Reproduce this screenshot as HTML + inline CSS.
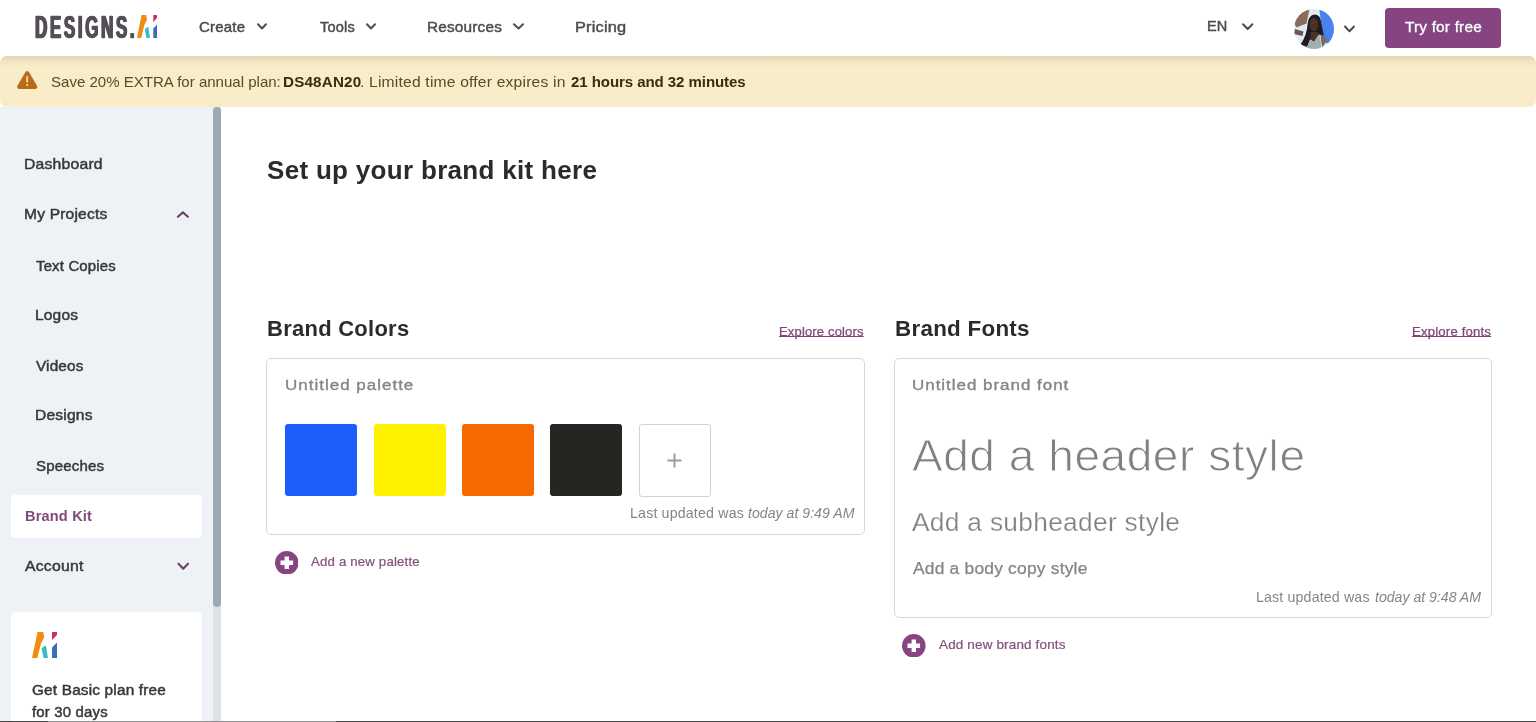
<!DOCTYPE html>
<html lang="en">
<head>
<meta charset="utf-8">
<title>Brand Kit - Designs.ai</title>
<style>
html,body{margin:0;padding:0;}
html{width:1536px;height:722px;overflow:hidden;}
body{width:1536px;height:722px;overflow:hidden;background:#fff;position:relative;font-family:"Liberation Sans",sans-serif;}
.t{position:absolute;transform-origin:0 0;white-space:nowrap;line-height:20px;height:20px;display:block;}
.app{position:absolute;left:0;top:0;width:1536px;height:722px;overflow:hidden;}
.a{position:absolute;display:block;}
.logo{left:35.2px;top:6.7px;font-size:32px;line-height:40px;font-weight:700;color:#544f56;white-space:nowrap;transform-origin:0 0;transform:scaleX(0.534);letter-spacing:4.8px;-webkit-text-stroke:0.6px #544f56;text-shadow:1.3px 0 #544f56,-1.3px 0 #544f56;}
.btn{left:1385px;top:8px;width:116px;height:40px;background:#864580;border-radius:4px;}
.bn{left:0;top:56px;width:1536px;height:51px;background:#f9ecc8;border-radius:7px;}
.bn-shadow{left:0;top:56px;width:1536px;height:11px;border-radius:7px 7px 0 0;background:linear-gradient(rgba(70,85,75,0.15),rgba(70,85,75,0.05) 45%,rgba(70,85,75,0));}
.card{border:1px solid #d8d8d8;border-radius:5px;}
.sw{top:424px;width:72px;height:72.3px;border-radius:3px;}

</style>
</head>
<body>
<div class="app">
<aside>
<div class="a" style="left:0;top:107px;width:213px;height:615px;background:#eef1f5;"></div>
<div class="a" style="left:213px;top:107px;width:8px;height:615px;background:#dfe3e9;"></div>
<div class="a" style="left:213px;top:107px;width:8px;height:500px;background:#9ea9b4;border-radius:4px;"></div>
<div class="a" style="left:11px;top:495px;width:191px;height:43px;background:#fff;border-radius:4px;"></div>
<div class="a" style="left:11px;top:612px;width:191px;height:110px;background:#fff;border-radius:5px 5px 0 0;"></div>
<svg class="a" style="left:170px;top:200px;width:30px;height:380px;" viewBox="170 200 30 380" fill="none" stroke="#6e4069" stroke-width="2.1" stroke-linecap="round" stroke-linejoin="round">
<polyline points="177.9,216.8 182.9,212.4 187.9,216.8"/>
<polyline points="178.5,563.7 183.2,568.8 188,563.7"/>
</svg>
<svg class="a" style="left:31.85px;top:631.85px;width:25.35px;height:26.15px;" viewBox="7.85 7.85 25.35 26.15" preserveAspectRatio="none">
<polygon points="13.4,7.85 19.2,7.85 20.1,13.4 16.9,19.2 13.1,34 7.85,34" fill="#f28c0f"/>
<polygon points="20.65,21.5 21.8,21.5 23.85,34 19.5,34 17.45,24.4" fill="#3bbcc0"/>
<polygon points="27.9,7.85 33.2,7.85 33.2,10.2 27.9,16" fill="#cf2c63"/>
<polygon points="27.9,23.3 33.2,18 33.2,34 27.9,34" fill="#3b6cb7"/>
</svg>
<span class="t" style="left:24.12px;top:155.02px;font-size:13.8px;letter-spacing:0.181px;color:#383838;transform:scaleX(1.140);-webkit-text-stroke:0.45px #383838;">Dashboard</span>
<span class="t" style="left:24.13px;top:205.17px;font-size:13.8px;letter-spacing:0.166px;color:#383838;transform:scaleX(1.129);-webkit-text-stroke:0.45px #383838;">My Projects</span>
<span class="t" style="left:36.44px;top:256.77px;font-size:13.8px;letter-spacing:0.166px;color:#383838;transform:scaleX(1.081);-webkit-text-stroke:0.45px #383838;">Text Copies</span>
<span class="t" style="left:35.13px;top:306.22px;font-size:13.8px;letter-spacing:0.166px;color:#383838;transform:scaleX(1.124);-webkit-text-stroke:0.45px #383838;">Logos</span>
<span class="t" style="left:35.75px;top:356.97px;font-size:13.8px;letter-spacing:0.166px;color:#383838;transform:scaleX(1.108);-webkit-text-stroke:0.45px #383838;">Videos</span>
<span class="t" style="left:35.12px;top:406.37px;font-size:13.8px;letter-spacing:0.166px;color:#383838;transform:scaleX(1.131);-webkit-text-stroke:0.45px #383838;">Designs</span>
<span class="t" style="left:35.84px;top:457.17px;font-size:13.8px;letter-spacing:0.166px;color:#383838;transform:scaleX(1.088);-webkit-text-stroke:0.45px #383838;">Speeches</span>
<span class="t" style="left:25.00px;top:506.15px;font-size:14.0px;letter-spacing:0.168px;color:#7f4a7b;transform:scaleX(1.040);font-weight:700;">Brand Kit</span>
<span class="t" style="left:24.76px;top:557.12px;font-size:13.8px;letter-spacing:0.214px;color:#383838;transform:scaleX(1.140);-webkit-text-stroke:0.45px #383838;">Account</span>
<span class="t" style="left:32.05px;top:681.07px;font-size:13.8px;letter-spacing:0.166px;color:#383838;transform:scaleX(1.112);-webkit-text-stroke:0.45px #383838;">Get Basic plan free</span>
<span class="t" style="left:32.04px;top:702.77px;font-size:13.8px;letter-spacing:0.166px;color:#383838;transform:scaleX(1.083);-webkit-text-stroke:0.45px #383838;">for 30 days</span>
</aside>
<main>
<div class="a card" style="left:266px;top:358px;width:596.5px;height:175px;"></div>
<div class="a card" style="left:894px;top:358px;width:595.5px;height:257.5px;"></div>
<div class="a sw" style="left:285px;background:#1d5dfb;"></div>
<div class="a sw" style="left:373.5px;background:#fff200;"></div>
<div class="a sw" style="left:462px;background:#f56a00;"></div>
<div class="a sw" style="left:550.4px;background:#252522;"></div>
<div class="a" style="left:639px;top:424px;width:70px;height:70.5px;border:1px solid #d2d2d2;border-radius:3px;"></div>
<svg class="a" style="left:666px;top:452px;width:17px;height:17px;" viewBox="0 0 17 17" stroke="#9b9b9b" stroke-width="2">
<line x1="8.5" y1="1.5" x2="8.5" y2="15.5"/><line x1="1.5" y1="8.5" x2="15.5" y2="8.5"/>
</svg>
<svg class="a" style="left:274.5px;top:550.8px;width:23.6px;height:23.6px;" viewBox="0 0 24 24">
<circle cx="12" cy="12" r="12" fill="#864580"/><path d="M12 5.6v12.8M5.6 12h12.8" stroke="#fff" stroke-width="4.5" fill="none"/>
</svg>
<svg class="a" style="left:902.2px;top:633.7px;width:23.6px;height:23.6px;" viewBox="0 0 24 24">
<circle cx="12" cy="12" r="12" fill="#864580"/><path d="M12 5.6v12.8M5.6 12h12.8" stroke="#fff" stroke-width="4.5" fill="none"/>
</svg>
<span class="t" style="left:267.25px;top:160.02px;font-size:25.2px;letter-spacing:0.302px;color:#2b2b2b;transform:scaleX(1.032);font-weight:700;">Set up your brand kit here</span>
<span class="t" style="left:267.08px;top:319.07px;font-size:21.6px;letter-spacing:0.259px;color:#2b2b2b;transform:scaleX(1.018);font-weight:700;">Brand Colors</span>
<span class="t" style="left:894.86px;top:319.07px;font-size:21.6px;letter-spacing:0.259px;color:#2b2b2b;transform:scaleX(1.037);font-weight:700;">Brand Fonts</span>
<span class="t" style="left:779.43px;top:322.16px;font-size:12.1px;letter-spacing:0.145px;color:#80477b;transform:scaleX(1.076);-webkit-text-stroke:0.25px #80477b;text-decoration:underline;text-underline-offset:0.2px;text-decoration-thickness:1px;text-decoration-skip-ink:none;">Explore colors</span>
<span class="t" style="left:1412.44px;top:322.16px;font-size:12.1px;letter-spacing:0.145px;color:#80477b;transform:scaleX(1.092);-webkit-text-stroke:0.25px #80477b;text-decoration:underline;text-underline-offset:0.2px;text-decoration-thickness:1px;text-decoration-skip-ink:none;">Explore fonts</span>
<span class="t" style="left:284.56px;top:375.04px;font-size:14.9px;letter-spacing:0.881px;color:#858585;transform:scaleX(1.140);-webkit-text-stroke:0.35px #858585;">Untitled palette</span>
<span class="t" style="left:912.16px;top:375.04px;font-size:14.9px;letter-spacing:0.855px;color:#858585;transform:scaleX(1.140);-webkit-text-stroke:0.35px #858585;">Untitled brand font</span>
<span class="t" style="left:629.79px;top:503.21px;font-size:14.1px;letter-spacing:0.169px;color:#858585;transform:scaleX(1.007);">Last updated was</span>
<span class="t" style="left:748.20px;top:503.21px;font-size:14.1px;letter-spacing:0.013px;color:#858585;transform:scaleX(1.002);font-style:italic;">today at 9:49 AM</span>
<span class="t" style="left:1256.30px;top:587.21px;font-size:14.1px;letter-spacing:0.169px;color:#858585;transform:scaleX(1.004);">Last updated was</span>
<span class="t" style="left:1375.20px;top:587.21px;font-size:14.1px;letter-spacing:-0.014px;color:#858585;transform:scaleX(1.002);font-style:italic;">today at 9:48 AM</span>
<span class="t" style="left:311.31px;top:552.12px;font-size:12.2px;letter-spacing:0.146px;color:#82507e;transform:scaleX(1.087);-webkit-text-stroke:0.2px #82507e;">Add a new palette</span>
<span class="t" style="left:939.11px;top:635.02px;font-size:12.2px;letter-spacing:0.146px;color:#82507e;transform:scaleX(1.105);-webkit-text-stroke:0.2px #82507e;">Add new brand fonts</span>
<span class="t" style="left:912.23px;top:445.68px;font-size:44.2px;letter-spacing:0.530px;color:#808080;transform:scaleX(1.041);-webkit-text-stroke:0.9px #fff;">Add a header style</span>
<span class="t" style="left:912.27px;top:511.66px;font-size:25.5px;letter-spacing:0.306px;color:#808080;transform:scaleX(1.031);-webkit-text-stroke:0.25px #fff;">Add a subheader style</span>
<span class="t" style="left:912.74px;top:559.06px;font-size:16.0px;letter-spacing:0.192px;color:#858585;transform:scaleX(1.087);-webkit-text-stroke:0.25px #858585;">Add a body copy style</span>
</main>
<section>
<div class="a bn"></div>
<div class="a bn-shadow"></div>
<svg class="a" style="left:14px;top:68px;width:28px;height:24px;" viewBox="14 68 28 24">
<path d="M27.2 73.3 L35.1 86.8 L19.3 86.8 Z" fill="#b96a1b" stroke="#b96a1b" stroke-width="4.4" stroke-linejoin="round"/>
<rect x="26.3" y="76" width="1.8" height="6.6" rx="0.7" fill="#f9dc9a"/>
<circle cx="27.2" cy="85" r="1.05" fill="#f9dc9a"/>
</svg>
<span class="t" style="left:50.50px;top:72.05px;font-size:15.0px;letter-spacing:0.001px;color:#5a4a25;transform:scaleX(1.002);">Save 20% EXTRA for annual plan:</span>
<span class="t" style="left:282.74px;top:72.05px;font-size:15.0px;letter-spacing:0.180px;color:#3a2c0c;transform:scaleX(1.013);font-weight:700;">DS48AN20</span>
<span class="t" style="left:360.46px;top:72.05px;font-size:15.0px;letter-spacing:0.180px;color:#5a4a25;transform:scaleX(1.043);">. Limited time offer expires in</span>
<span class="t" style="left:570.50px;top:72.05px;font-size:15.0px;letter-spacing:-0.070px;color:#3a2c0c;transform:scaleX(1.002);font-weight:700;">21 hours and 32 minutes</span>
</section>
<header>
<span class="a logo">DESIGNS.</span>
<svg class="a" style="left:136.5px;top:15.2px;width:20.6px;height:23px;" viewBox="7.85 7.85 25.35 26.15" preserveAspectRatio="none">
<polygon points="13.4,7.85 19.2,7.85 20.1,13.4 16.9,19.2 13.1,34 7.85,34" fill="#f28c0f"/>
<polygon points="20.65,21.5 21.8,21.5 23.85,34 19.5,34 17.45,24.4" fill="#3bbcc0"/>
<polygon points="27.9,7.85 33.2,7.85 33.2,10.2 27.9,16" fill="#cf2c63"/>
<polygon points="27.9,23.3 33.2,18 33.2,34 27.9,34" fill="#3b6cb7"/>
</svg>
<svg class="a" style="left:0;top:0;width:1536px;height:56px;" viewBox="0 0 1536 56" fill="none" stroke="#4d4d4d" stroke-width="2" stroke-linecap="round" stroke-linejoin="round">
<polyline points="258,24.3 262,28.5 266,24.3"/>
<polyline points="367,24.3 371,28.5 375,24.3"/>
<polyline points="514,24.3 518.5,28.5 523,24.3"/>
<polyline points="1243,24.2 1247.7,29 1252.4,24.2"/>
<polyline points="1345,26.5 1349.5,31.2 1354,26.5"/>
</svg>
<svg class="a" style="left:1294px;top:9px;width:40px;height:40px;" viewBox="0 0 40 40">
<defs><clipPath id="av"><circle cx="20" cy="20" r="20"/></clipPath><filter id="avb" x="-10%" y="-10%" width="120%" height="120%"><feGaussianBlur stdDeviation="0.7"/></filter></defs>
<g clip-path="url(#av)"><g filter="url(#avb)">
<rect x="-2" y="-2" width="44" height="44" fill="#e3ebf0"/>
<polygon points="25,-2 42,-2 42,36 32,34 29,28" fill="#4a82ec"/>
<polygon points="15.5,0 12.5,14.5 2.5,18.5 -1,12 7,3" fill="#8a6b5f"/>
<polygon points="1,20 9.5,22.5 8.5,27 0,25" fill="#6d5751"/>
<path d="M20.6 5.5 Q26 5.5 27 12 L29.8 27 L26 26 L16 31 L13 38 L6.5 35.5 Q13 26 13.6 15 Q14.5 6 20.6 5.5Z" fill="#1f1c27"/>
<ellipse cx="19.8" cy="15.6" rx="4.3" ry="6.6" fill="#4c3128"/>
<polygon points="17,23 23,23 25.3,25 20,33 16,30" fill="#4c3128"/>
<polygon points="16,30.5 20,33 25.3,24.7 27.5,38 22,41 13,39" fill="#9fb0ae"/>
<polygon points="26.5,25 33.5,30.5 28.5,38.5 27,32" fill="#7d6963"/>
</g></g>
</svg>
<div class="a btn"></div>
<span class="t" style="left:198.53px;top:17.08px;font-size:14.5px;letter-spacing:0.174px;color:#4d4d4d;transform:scaleX(1.036);-webkit-text-stroke:0.45px #4d4d4d;">Create</span>
<span class="t" style="left:319.73px;top:17.08px;font-size:14.5px;letter-spacing:0.174px;color:#4d4d4d;transform:scaleX(1.007);-webkit-text-stroke:0.45px #4d4d4d;">Tools</span>
<span class="t" style="left:427.18px;top:17.08px;font-size:14.5px;letter-spacing:0.174px;color:#4d4d4d;transform:scaleX(1.059);-webkit-text-stroke:0.45px #4d4d4d;">Resources</span>
<span class="t" style="left:574.63px;top:17.08px;font-size:14.5px;letter-spacing:0.174px;color:#4d4d4d;transform:scaleX(1.128);-webkit-text-stroke:0.45px #4d4d4d;">Pricing</span>
<span class="t" style="left:1207.22px;top:16.03px;font-size:14.5px;letter-spacing:0.079px;color:#4d4d4d;transform:scaleX(1.002);-webkit-text-stroke:0.45px #4d4d4d;">EN</span>
<span class="t" style="left:1405.15px;top:17.10px;font-size:15px;letter-spacing:0.180px;color:#fff;transform:scaleX(1.026);-webkit-text-stroke:0.3px #fff;">Try for free</span>
</header>
<div class="a" style="left:0;top:721px;width:1536px;height:1px;background:#4a4a4a;"></div>
<div class="a" style="left:48px;top:721px;width:288px;height:1px;background:#8d8d8d;"></div>
</div>
</body>
</html>
